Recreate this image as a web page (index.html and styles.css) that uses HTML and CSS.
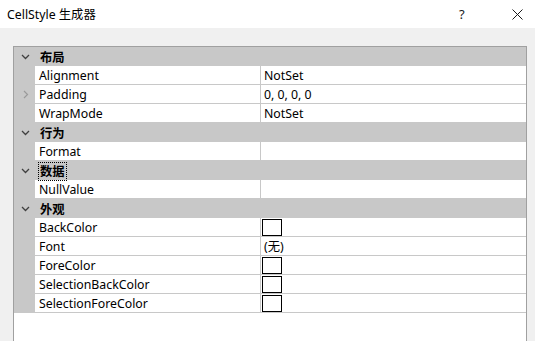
FILE: index.html
```html
<!DOCTYPE html>
<html lang="zh-CN">
<head>
    <meta charset="UTF-8">
    <title>CellStyle 生成器</title>
    <link rel="stylesheet" href="styles.css">
</head>
<body>

<div class="titlebar">
    <span class="title">CellStyle 生成器</span>
    <span class="help">?</span>
    <span class="close">
        <svg width="11" height="11" viewBox="0 0 11 11"><path d="M0.5 0.5 L10.5 10.5 M10.5 0.5 L0.5 10.5" stroke="#1a1a1a" stroke-width="1" fill="none"/></svg>
    </span>
</div>

<div class="dialog">
    <div class="grid">
        <div class="cat">
            <span class="toggle"><svg width="9" height="6" viewBox="0 0 9 6"><polyline points="1,1 4.5,4.5 8,1" stroke="#404040" stroke-width="1.3" fill="none"/></svg></span>
            <span class="cat-name">布局</span>
        </div>
        <div class="prop">
            <span class="margin"></span>
            <span class="name">Alignment</span>
            <span class="value">NotSet</span>
        </div>
        <div class="prop">
            <span class="margin"><svg width="6" height="9" viewBox="0 0 6 9"><polyline points="1,1 4.5,4.5 1,8" stroke="#9a9a9a" stroke-width="1.2" fill="none"/></svg></span>
            <span class="name">Padding</span>
            <span class="value">0, 0, 0, 0</span>
        </div>
        <div class="prop">
            <span class="margin"></span>
            <span class="name">WrapMode</span>
            <span class="value">NotSet</span>
        </div>
        <div class="cat">
            <span class="toggle"><svg width="9" height="6" viewBox="0 0 9 6"><polyline points="1,1 4.5,4.5 8,1" stroke="#404040" stroke-width="1.3" fill="none"/></svg></span>
            <span class="cat-name">行为</span>
        </div>
        <div class="prop">
            <span class="margin"></span>
            <span class="name">Format</span>
            <span class="value"></span>
        </div>
        <div class="cat">
            <span class="toggle"><svg width="9" height="6" viewBox="0 0 9 6"><polyline points="1,1 4.5,4.5 8,1" stroke="#404040" stroke-width="1.3" fill="none"/></svg></span>
            <span class="cat-name focused">数据</span>
        </div>
        <div class="prop">
            <span class="margin"></span>
            <span class="name">NullValue</span>
            <span class="value"></span>
        </div>
        <div class="cat">
            <span class="toggle"><svg width="9" height="6" viewBox="0 0 9 6"><polyline points="1,1 4.5,4.5 8,1" stroke="#404040" stroke-width="1.3" fill="none"/></svg></span>
            <span class="cat-name">外观</span>
        </div>
        <div class="prop">
            <span class="margin"></span>
            <span class="name">BackColor</span>
            <span class="value"><span class="swatch"></span></span>
        </div>
        <div class="prop">
            <span class="margin"></span>
            <span class="name">Font</span>
            <span class="value">(无)</span>
        </div>
        <div class="prop">
            <span class="margin"></span>
            <span class="name">ForeColor</span>
            <span class="value"><span class="swatch"></span></span>
        </div>
        <div class="prop">
            <span class="margin"></span>
            <span class="name">SelectionBackColor</span>
            <span class="value"><span class="swatch"></span></span>
        </div>
        <div class="prop">
            <span class="margin"></span>
            <span class="name">SelectionForeColor</span>
            <span class="value"><span class="swatch"></span></span>
        </div>
    </div>
</div>

</body>
</html>
```

FILE: styles.css
```css
body {
    margin: 0;
    padding: 0;
    font-family: "Noto Sans", "Noto Sans CJK SC", sans-serif;
    font-size: 12.3px;
    color: #000;
    background-color: #f0f0f0;
    height: 341px;
    overflow: hidden;
}
.titlebar {
    height: 28px;
    background-color: #fff;
    display: flex;
    align-items: center;
}
.title {
    margin-left: 7px;
    flex: 1;
    color: #000;
}
.help {
    width: 8px;
    margin-right: 45px;
    font-size: 13px;
    color: #1a1a1a;
}
.close {
    width: 11px;
    height: 11px;
    margin-right: 12px;
    margin-top: 1px;
    display: flex;
}
.dialog {
    padding: 18px 8px 0 13px;
}
.grid {
    height: 295px;
    background-color: #fff;
    border: 1px solid #a0a0a0;
    border-bottom: none;
    box-sizing: border-box;
}
.cat {
    height: 19px;
    background-color: #c8c8c8;
    display: flex;
    align-items: center;
}
.toggle {
    width: 21px;
    display: flex;
    justify-content: center;
    padding-left: 2px;
    box-sizing: border-box;
}
.cat-name {
    font-weight: bold;
    margin-left: 3px;
    margin-top: 1px;
    padding: 0 1px;
    line-height: 17px;
    border: 1px dotted transparent;
}
.cat-name.focused {
    border-color: #000;
}
.prop {
    height: 19px;
    display: flex;
    border-bottom: 1px solid #c8c8c8;
    box-sizing: border-box;
}
.margin {
    width: 21px;
    background-color: #c8c8c8;
    display: flex;
    align-items: center;
    justify-content: center;
    padding-left: 2px;
    box-sizing: border-box;
}
.name {
    width: 226px;
    padding-left: 4px;
    padding-top: 2px;
    line-height: 16px;
    border-right: 1px solid #c8c8c8;
    box-sizing: border-box;
    white-space: nowrap;
}
.value {
    flex: 1;
    padding-left: 3px;
    padding-top: 2px;
    line-height: 16px;
    display: flex;
    align-items: center;
    box-sizing: border-box;
}
.swatch {
    width: 18px;
    height: 15px;
    margin-left: -2px;
    margin-top: -2px;
    border: 1px solid #000;
    background-color: #fff;
}
```
